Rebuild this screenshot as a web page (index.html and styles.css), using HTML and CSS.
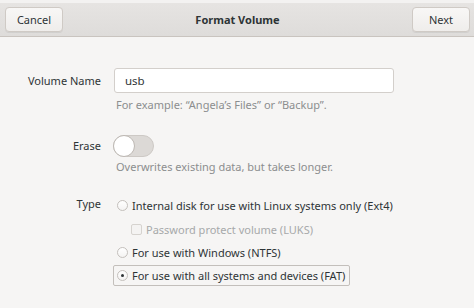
FILE: index.html
```html
<!DOCTYPE html>
<html>
<head>
<meta charset="utf-8">
<link rel="stylesheet" href="styles.css">
</head>
<body>
<div class="window">
  <div class="topstrip"></div>
  <header class="headerbar">
    <button class="btn">Cancel</button>
    <div class="title">Format Volume</div>
    <button class="btn">Next</button>
  </header>
  <main class="form">
    <div class="row row-name">
      <div class="label">Volume Name</div>
      <div class="field">
        <div class="entry">usb</div>
        <div class="hint hint-name">For example: “Angela’s Files” or “Backup”.</div>
      </div>
    </div>
    <div class="row row-erase">
      <div class="label label-erase">Erase</div>
      <div class="field">
        <div class="switch"><div class="knob"></div></div>
        <div class="hint hint-erase">Overwrites existing data, but takes longer.</div>
      </div>
    </div>
    <div class="row row-type">
      <div class="label label-type">Type</div>
      <div class="field options">
        <div class="opt"><span class="radio"></span><span>Internal disk for use with Linux systems only (Ext4)</span></div>
        <div class="opt sub disabled"><span class="check"></span><span>Password protect volume (LUKS)</span></div>
        <div class="opt"><span class="radio"></span><span>For use with Windows (NTFS)</span></div>
        <div class="opt focused"><span class="radio on"></span><span>For use with all systems and devices (FAT)</span></div>
      </div>
    </div>
  </main>
</div>
</body>
</html>
```
FILE: styles.css
```css
html, body {
  margin: 0;
  padding: 0;
}
body {
  width: 474px;
  height: 308px;
  overflow: hidden;
  background: #f6f5f4;
  font-family: "Noto Sans", "Open Sans", sans-serif;
  font-size: 11px;
  color: #2e3436;
}
.window {
  height: 308px;
  background: #f6f5f4;
}
.topstrip {
  height: 3px;
  background: #f3f2f1;
}
.headerbar {
  height: 33px;
  border-bottom: 1px solid #c9c4bf;
  background: linear-gradient(#e6e4e2, #dedcda);
  display: flex;
  align-items: center;
  justify-content: space-between;
  padding: 0 4px 0 5px;
}
.btn {
  width: 58px;
  height: 25px;
  margin-top: 0;
  border: 1px solid #cfcac5;
  border-radius: 4px;
  background: linear-gradient(#f8f7f6, #efedeb);
  box-shadow: 0 1px 0 rgba(0,0,0,0.06);
  font-family: inherit;
  font-size: 11px;
  color: #2e3436;
  padding: 0;
}
.title {
  font-weight: bold;
  font-size: 11px;
  color: #2e3436;
}
.form {
  padding-top: 31px;
}
.row {
  display: flex;
}
.label {
  width: 101px;
  text-align: right;
  flex-shrink: 0;
  margin-right: 13px;
  line-height: 25px;
}
.field {
  display: flex;
  flex-direction: column;
}
.entry {
  width: 268px;
  height: 23px;
  border: 1px solid #d3cfcb;
  border-radius: 3px;
  background: #ffffff;
  padding-left: 10px;
  line-height: 23px;
  font-size: 11.5px;
}
.hint {
  color: #8c8e8f;
  line-height: 14px;
  margin-top: 5px;
  padding-left: 2px;
}
.row-erase {
  margin-top: 23px;
}
.label-erase {
  line-height: 22px;
}
.switch {
  width: 39px;
  height: 20px;
  border: 1px solid #cdc9c5;
  border-radius: 11px;
  background: #dcd9d6;
  position: relative;
  margin-left: -1px;
}
.knob {
  position: absolute;
  left: -1px;
  top: -1px;
  width: 20px;
  height: 20px;
  border: 1px solid #bdb8b3;
  border-radius: 50%;
  background: #ffffff;
}
.hint-erase {
  margin-top: 3px;
}
.row-type {
  margin-top: 22px;
}
.label-type {
  line-height: 16px;
}
.options {
  gap: 5px;
}
.opt {
  display: flex;
  align-items: center;
  height: 16px;
  padding-left: 3px;
  border: 1px solid transparent;
  margin-left: -1px;
}
.opt.sub {
  padding-left: 17px;
  margin-top: 1px;
}
.opt.disabled {
  color: #a7a9aa;
}
.opt.focused {
  height: 19px;
  width: 232px;
  border: 1px solid #c3bfbb;
  border-radius: 2px;
  margin-top: -1px;
}
.radio {
  width: 11px;
  height: 11px;
  border: 1px solid #c4c0bc;
  border-radius: 50%;
  background: linear-gradient(#ffffff, #f4f3f2);
  box-sizing: border-box;
  margin-right: 4px;
  flex-shrink: 0;
  position: relative;
}
.radio.on::after {
  content: "";
  position: absolute;
  left: 3px;
  top: 3px;
  width: 3px;
  height: 3px;
  border-radius: 50%;
  background: #2e3436;
}
.check {
  width: 11px;
  height: 11px;
  border: 1px solid #d6d3cf;
  border-radius: 2px;
  background: #f4f3f2;
  box-sizing: border-box;
  margin-right: 4px;
  flex-shrink: 0;
}
```
